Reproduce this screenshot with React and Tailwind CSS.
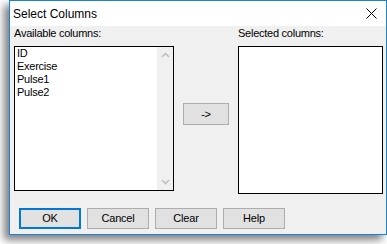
import React from "react";

const font = { fontFamily: '"Liberation Sans", Arial, sans-serif' };

function Btn({ children, primary }) {
  return (
    <div
      className={
        "w-[62px] h-[21px] flex items-center justify-center bg-[#e1e1e1] text-[11px] tracking-[-0.2px] text-black leading-none " +
        (primary ? "border-2 border-[#0078d7]" : "border border-[#adadad]")
      }
    >
      {children}
    </div>
  );
}

export default function App() {
  return (
    <div className="w-[387px] h-[244px] bg-white overflow-hidden relative" style={font}>
      <div className="ml-[9px] w-[378px] h-[235px] border border-[#1883d7] bg-[#f0f0f0] flex flex-col shadow-[-5px_5px_8px_rgba(0,0,0,0.5)]">
        {/* Title bar */}
        <div className="h-[25px] bg-white flex items-center justify-between pl-[3px] pr-[9px]">
          <span className="text-[12px] text-black">Select Columns</span>
          <svg width="11" height="11" viewBox="0 0 11 11">
            <path d="M0.5 0.5 L10.5 10.5 M10.5 0.5 L0.5 10.5" stroke="#000" strokeWidth="1" />
          </svg>
        </div>
        {/* Body */}
        <div className="flex-1 flex flex-col pt-[1px] pl-[4px] tracking-[-0.25px]">
          <div className="flex">
            {/* Left column */}
            <div className="w-[160px] flex flex-col">
              <div className="h-[13px] leading-[13px] text-[11px] text-black">Available columns:</div>
              <div className="mt-[6px] h-[145px] border border-black bg-white flex">
                <div className="flex-1 pl-[2px] text-[11px] leading-[13px] text-black">
                  <div>ID</div>
                  <div>Exercise</div>
                  <div>Pulse1</div>
                  <div>Pulse2</div>
                </div>
                <div className="w-[16px] bg-[#f0f0f0] flex flex-col items-center justify-between py-[5px]">
                  <svg width="9" height="6" viewBox="0 0 9 6">
                    <path d="M1 5 L4.5 1.5 L8 5" stroke="#c0c0c0" strokeWidth="1.6" fill="none" />
                  </svg>
                  <svg width="9" height="6" viewBox="0 0 9 6">
                    <path d="M1 1 L4.5 4.5 L8 1" stroke="#c0c0c0" strokeWidth="1.6" fill="none" />
                  </svg>
                </div>
              </div>
            </div>
            {/* Middle */}
            <div className="ml-[9px] pt-[76px]">
              <div className="w-[46px] h-[22px] bg-[#e1e1e1] border border-[#adadad] flex items-center justify-center text-[11px] text-black leading-none">
                -&gt;
              </div>
            </div>
            {/* Right column */}
            <div className="ml-[9px] w-[145px] flex flex-col">
              <div className="h-[13px] leading-[13px] text-[11px] text-black">Selected columns:</div>
              <div className="mt-[6px] h-[148px] border border-black bg-white"></div>
            </div>
          </div>
          {/* Buttons */}
          <div className="mt-[14px] pl-[5px] flex gap-[6px]">
            <Btn primary>OK</Btn>
            <Btn>Cancel</Btn>
            <Btn>Clear</Btn>
            <Btn>Help</Btn>
          </div>
        </div>
      </div>
    </div>
  );
}
